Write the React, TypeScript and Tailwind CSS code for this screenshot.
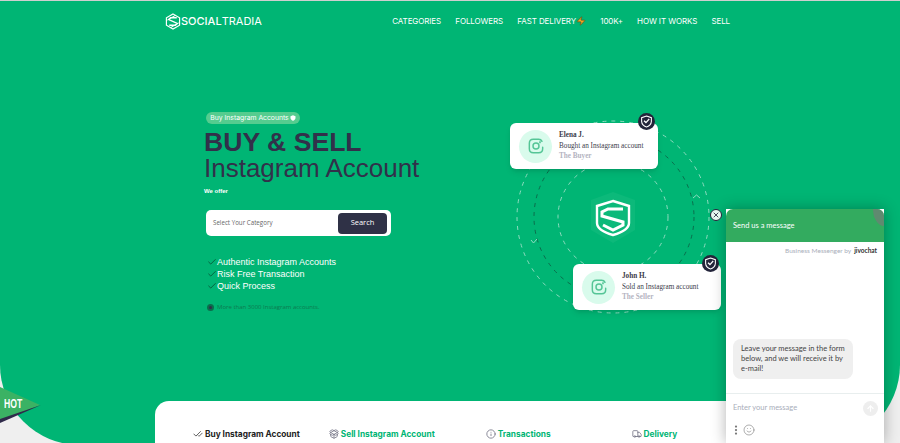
import React from 'react'
import { ArrowUp, Check, Info, MoreVertical, PackageOpen, Smile, Truck, X, Zap, CheckCheck } from 'lucide-react'

const navItems = ['CATEGORIES', 'FOLLOWERS', 'FAST DELIVERY', '100K+', 'HOW IT WORKS', 'SELL']
const perks = ['Authentic Instagram Accounts', 'Risk Free Transaction', 'Quick Process']

const LogoMark = () => (
    <svg width="16" height="17" viewBox="0 0 34 36" fill="none" stroke="white" strokeWidth="2.5">
        <path d="M17 2 L31 10 V26 L17 34 L3 26 V10 Z" />
        <path d="M25 10 L12 10 L8 14 L26 22 L22 26 L9 26" strokeWidth="3" />
        <path d="M22 5 L5 15 M29 21 L12 31" strokeWidth="2" />
    </svg>
)

const ShieldBadge = ({ className }: { className: string }) => (
    <div className={`absolute flex h-[17px] w-[17px] items-center justify-center rounded-full bg-[#23243a] ${className}`}>
        <svg width="13" height="13" viewBox="0 0 24 24" fill="none" stroke="white" strokeWidth="2">
            <path d="M12 2 L21 5 V12 C21 17 16 21 12 22 C8 21 3 17 3 12 V5 Z" />
            <path d="M7.500 10.500 L11 14 L17 7.500" strokeWidth="2.400" />
        </svg>
    </div>
)

const InstaIcon = () => (
    <div className="flex h-[33px] w-[33px] shrink-0 items-center justify-center rounded-full bg-[#d9fbec]">
        <svg width="16" height="16" viewBox="0 0 24 24" fill="none" stroke="#55c596" strokeWidth="2.200" strokeLinecap="round">
            <path d="M22 14 V16 C22 20 20 22 16 22 H8 C4 22 2 20 2 16 V8 C2 4 4 2 8 2 H16 C18 2 20 3 21 5" />
            <circle cx="12" cy="12" r="4.500" />
            <circle cx="18" cy="6.500" r="0.600" />
        </svg>
    </div>
)

const PersonCard = ({ name, action, role, className, badge }: { name: string; action: string; role: string; className: string; badge: string }) => (
    <div className={`absolute flex h-[46px] w-[148px] items-center gap-[7px] rounded-[6px] bg-white pl-[9px] shadow-md ${className}`}>
        <InstaIcon />
        <div className="font-['Liberation_Serif',serif] text-[7.200px] leading-[10.500px] text-[#3b3b4a]">
            <div className="font-bold">{name}</div>
            <div>{action}</div>
            <div className="font-bold text-[#b4b4bf]">{role}</div>
        </div>
        <ShieldBadge className={badge} />
    </div>
)

const Orbit = () => (
    <svg className="absolute left-0 top-0" width="230" height="220" viewBox="0 0 230 220" fill="none">
        <circle cx="108" cy="113" r="96" stroke="#8fdcc0" strokeWidth="1" strokeDasharray="4 5" />
        <circle cx="109" cy="113" r="80" stroke="#0b6d4c" strokeWidth="1" strokeDasharray="4 5" />
        <circle cx="108" cy="113" r="55" stroke="#8fdcc0" strokeWidth="1" strokeDasharray="4 5" />
        <path d="M188 94 L191.500 91 L195 94" stroke="#8fdcc0" />
        <path d="M26 136 L28.500 139 L32 135" stroke="#8fdcc0" />
        <path d="M108 88 L130 96 V126 L108 139 L86 126 V96 Z" fill="#0cb97a" />
        <path d="M108 97 L124 102 V119 C124 125 115 129 108 131 C101 129 92 125 92 119 V102 Z" stroke="white" strokeWidth="2.400" />
        <path d="M118 105 L103 105 L97 108 V112 L118 118 V121 L108 126 L98 121" stroke="white" strokeWidth="3" />
    </svg>
)

const SearchBox = () => (
    <div className="ml-[2px] mt-[15px] flex h-[26px] w-[185px] items-center justify-between rounded-[5px] bg-white pl-[7px] pr-[4px]">
        <span className="font-['Open_Sans',sans-serif] text-[6.200px] text-[#666]">Select Your Category</span>
        <button className="h-[21px] w-[49px] rounded-[4px] bg-[#2f3146] font-['Open_Sans',sans-serif] text-[7.500px] text-white">Search</button>
    </div>
)

const HotRibbon = () => (
    <div className="absolute bottom-0 left-0 h-[60px] w-[42px]">
        <svg className="absolute left-0 top-0" width="42" height="60" viewBox="0 0 42 60">
            <path d="M0 4 L40 22 L0 38 Z" fill="#3bb264" />
            <path d="M0 40 L41 22 L0 36 Z" fill="#2f2a4a" />
        </svg>
        <span className="absolute left-[4px] top-[15px] origin-left scale-x-[0.72] font-['Liberation_Sans',sans-serif] text-[12px] font-bold leading-[13px] text-white">HOT</span>
    </div>
)

const ChatWidget = () => (
    <div className="absolute right-[16px] top-[209px] flex h-[234px] w-[158px] flex-col bg-white font-['Lato',sans-serif] shadow-[0_0_14px_rgba(0,0,0,0.3)]">
        <button className="absolute -left-[16px] top-0 flex h-[12px] w-[12px] items-center justify-center rounded-full border border-[#23243a] bg-[#e6f7f0]">
            <X size={8} strokeWidth={2.5} color="#23243a" />
        </button>
        <div className="relative flex h-[33px] items-center overflow-hidden rounded-t-[7px] bg-[#33ab5f] pl-[7px] text-[7.500px] text-white">
            Send us a message
            <div className="absolute right-0 top-0 h-[17px] w-[11px] rounded-bl-[100%] bg-[#5f8a70]" />
        </div>
        <div className="flex items-center justify-end gap-[3px] pr-[7px] pt-[4px] text-[6.500px] leading-[9px] text-[#a9aeba]">
            Business Messenger by <span className="font-bold text-[#333]">jivochat</span>
        </div>
        <div className="ml-[7px] mt-[84px] w-[120px] rounded-[8px] bg-[#efefef] px-[8px] py-[5px] text-[7.500px] leading-[10px] text-[#444]">
            Leave your message in the form below, and we will receive it by e-mail!
        </div>
        <div className="mt-[14px] flex h-[29px] shrink-0 items-center justify-between border-t border-[#e8eeee] pl-[7px] pr-[6px] text-[7.500px] text-[#a9aeba]">
            Enter your message
            <div className="flex h-[15px] w-[15px] items-center justify-center rounded-full bg-[#eeeeee]">
                <ArrowUp size={9} color="white" strokeWidth={3} />
            </div>
        </div>
        <div className="mt-[2px] flex items-center gap-[1px] pl-[4px] text-[#777]">
            <MoreVertical size={12} strokeWidth={2.5} />
            <Smile size={12} strokeWidth={1.2} />
        </div>
    </div>
)

const App = () => {
    return (
        <div className="relative h-[443px] w-[900px] overflow-hidden bg-[#efefef] font-['Liberation_Sans',sans-serif]">
            <div className="h-px bg-[#cfcfcf]" />
            <section className="flex h-[444px] flex-col rounded-b-[80px] bg-[#00b574]">
                {/* Nav */}
                <header className="flex items-center justify-between pl-[165px] pr-[170px] pt-[12px]">
                    <div className="flex items-center">
                        <LogoMark />
                        <span className="font-['Inter',sans-serif] text-[11px] font-medium text-white">
                            SOCIAL<span className="font-normal">TRADIA</span>
                        </span>
                    </div>
                    <nav className="-mt-px flex items-center gap-[14.200px] font-['Inter',sans-serif] text-[8px] tracking-[-0.1px] text-white">
                        {navItems.map((item) => (
                            <a key={item} className="flex items-center">
                                {item}
                                {item === 'FAST DELIVERY' && <Zap size={10} fill="#f5a623" color="#6b4a10" strokeWidth={1.5} />}
                            </a>
                        ))}
                    </nav>
                </header>

                {/* Hero */}
                <main className="flex pl-[204px] pt-[73px]">
                    <div className="w-[301px] pt-[9px]">
                        <span className="ml-[2px] flex h-[12px] w-[94px] items-center justify-center gap-[1px] rounded-full bg-[#55cc8f] font-['Inter',sans-serif] text-[6.800px] text-white">
                            Buy Instagram Accounts
                            <svg width="6" height="6" viewBox="0 0 24 24" fill="white"><path d="M12 1 L22 5 V12 C22 18 16 22 12 23 C8 22 2 18 2 12 V5 Z" /></svg>
                        </span>
                        <h1 className="mt-[5px] text-[26.600px] font-bold leading-[26px] text-[#32304a]">BUY &amp; SELL</h1>
                        <h2 className="text-[26px] leading-[27px] text-[#32304a]">Instagram Account</h2>
                        <p className="mt-[5px] text-[6px] font-bold leading-[8px] text-white">We offer</p>
                        <SearchBox />
                        <ul className="ml-[3px] mt-[20px] text-[9px] leading-[12px] text-white">
                            {perks.map((perk) => (
                                <li key={perk} className="flex items-center">
                                    <Check size={10} color="#07492f" strokeWidth={1.8} />
                                    {perk}
                                </li>
                            ))}
                        </ul>
                        <div className="ml-[3px] mt-[11px] flex items-center gap-[3px] font-['Open_Sans',sans-serif] text-[6px] text-[#0d7a50]">
                            <span className="flex h-[7px] w-[7px] items-center justify-center rounded-full bg-[#0b6d4c]">
                                <span className="h-[3px] w-[3px] rounded-full bg-[#32304a]" />
                            </span>
                            More than 3000 Instagram accounts.
                        </div>
                    </div>

                    {/* Diagram */}
                    <div className="relative mt-px h-[220px] w-[230px]">
                        <Orbit />
                        <PersonCard className="left-[5px] top-[19px]" badge="-top-[10px] right-[3px]" name="Elena J." action="Bought an Instagram account" role="The Buyer" />
                        <PersonCard className="left-[68px] top-[160px]" badge="-top-[9px] right-[2px]" name="John H." action="Sold an Instagram account" role="The Seller" />
                    </div>
                </main>

                {/* Tabs panel */}
                <div className="ml-[155px] mt-[77px] flex h-[60px] w-[590px] rounded-tl-[14px] rounded-tr-[14px] bg-white pl-[38px] pt-[21px] font-['Inter',sans-serif] text-[8.300px] font-bold leading-[10px] text-[#00b574]">
                    <a className="flex items-center gap-[2px] text-[#222]"><CheckCheck size={10} color="#444" />Buy Instagram Account</a>
                    <a className="ml-[29px] flex items-center gap-[2px]"><PackageOpen size={10} color="#778" />Sell Instagram Account</a>
                    <a className="ml-[51px] flex items-center gap-[2px]"><Info size={10} color="#778" />Transactions</a>
                    <a className="ml-[81px] flex items-center gap-[2px]"><Truck size={10} color="#778" />Delivery</a>
                </div>
            </section>
            <HotRibbon />
            <ChatWidget />
        </div>
    )
}

export default App
